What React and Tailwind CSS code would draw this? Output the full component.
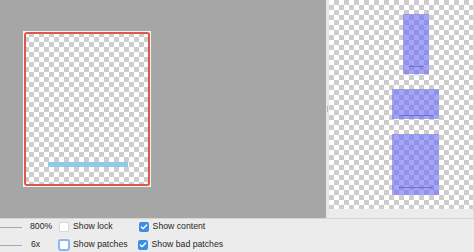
import { Check } from "lucide-react";

const checker =
  "bg-[repeating-conic-gradient(#cdcdcd_0%_25%,#ffffff_0%_50%)] bg-[length:10px_10px]";

function Box({ checked, focus }) {
  if (checked) {
    return (
      <span className="flex h-[10px] w-[10px] items-center justify-center rounded-[2px] bg-[#3a8ee6]">
        <Check size={8} strokeWidth={4} className="text-white" />
      </span>
    );
  }
  if (focus) {
    return (
      <span className="h-[12px] w-[12px] rounded-[3px] border-2 border-[#8bb5f0] bg-white" />
    );
  }
  return <span className="h-[10px] w-[10px] rounded-[2px] border border-[#d8d8d8] bg-white" />;
}

function Option({ checked, focus, label }) {
  return (
    <div className="flex items-center gap-[3px]">
      <div className="flex w-[12px] justify-center">
        <Box checked={checked} focus={focus} />
      </div>
      <span>{label}</span>
    </div>
  );
}

export default function App() {
  return (
    <div className="h-[252px] w-[474px] overflow-hidden bg-[#ececec] font-['Liberation_Sans',Arial,sans-serif] text-[8.7px] text-[#262626]">
      {/* Top area */}
      <div className="flex h-[218px]">
        {/* Editor canvas */}
        <div className="w-[326px] bg-[#a6a6a6] pl-[23px] pt-[31px]">
          <div className={`h-[156px] w-[128px] border border-[#f4f4f4] ${checker}`}>
            <div className="flex h-full w-full flex-col justify-end rounded-[3px] border-2 border-[#de564d] pb-[17px] pl-[22px]">
              <div className="h-[5px] w-[80px] bg-[#8fcbe6]" />
            </div>
          </div>
        </div>

        {/* Splitter */}
        <div className="flex w-[3px] items-center justify-center bg-[#e6e6e6]">
          <span className="h-[6px] w-px bg-[#b5b5b5]" />
        </div>

        {/* Preview */}
        <div className="flex flex-1 flex-col border-r border-[#dcdcdc]">
          <div className={`h-[209px] ${checker}`}>
            <div className="ml-[63px] flex w-[47px] flex-col items-center gap-[15px] pt-[14px]">
              <div className="flex h-[60px] w-[26px] flex-col items-center justify-end bg-[rgba(105,105,245,0.6)] pb-[7px]">
                <div className="h-px w-[14px] bg-[#6d6de0]" />
              </div>
              <div className="flex h-[30px] w-[47px] flex-col items-center justify-end bg-[rgba(105,105,245,0.6)] pb-[3px]">
                <div className="h-px w-[34px] bg-[#6d6de0]" />
              </div>
              <div className="flex h-[61px] w-[47px] flex-col items-center justify-end bg-[rgba(105,105,245,0.6)] pb-[7px]">
                <div className="h-px w-[34px] bg-[#6d6de0]" />
              </div>
            </div>
          </div>
        </div>
      </div>

      {/* Bottom controls */}
      <div className="flex h-[34px] flex-col justify-center gap-[6px] border-t border-[#d6d6d6] pt-[1px]">
        <div className="flex h-[12px] items-center">
          <span className="h-px w-[22px] bg-[#a8a8a8]" />
          <span className="ml-[8px] w-[28px]">800%</span>
          <Option label="Show lock" />
          <div className="ml-[25px]">
            <Option checked label="Show content" />
          </div>
        </div>
        <div className="flex h-[12px] items-center">
          <span className="h-px w-[22px] bg-[#a8a8a8]" />
          <span className="ml-[9px] w-[27px]">6x</span>
          <Option focus label="Show patches" />
          <div className="ml-[9px]">
            <Option checked label="Show bad patches" />
          </div>
        </div>
      </div>
    </div>
  );
}
